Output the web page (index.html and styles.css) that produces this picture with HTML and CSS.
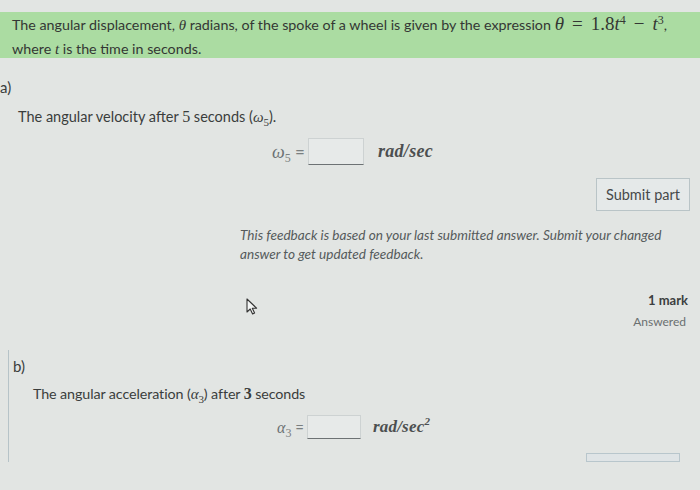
FILE: index.html
```html
<!DOCTYPE html>
<html>
<head>
<meta charset="utf-8">
<link rel="stylesheet" href="styles.css">
</head>
<body>
<div class="page">
  <div class="stem">
    <div>The angular displacement, <span class="m">θ</span> radians, of the spoke of a wheel is given by the expression <span class="math"><span class="m">θ</span><span class="op">=</span><span class="mr">1.8</span><span class="m">t</span><sup class="mr">4</sup><span class="op">−</span><span class="m">t</span><sup class="mr">3</sup></span>,</div>
    <div>where <span class="m">t</span> is the time in seconds.</div>
  </div>

  <div class="part-a">
    <div class="label-a">a)</div>
    <div class="prompt-a">The angular velocity after <span class="num">5</span> seconds (<span class="m">ω</span><sub class="mr">5</sub>).</div>
    <div class="answer answer-a">
      <span class="lhs"><span class="m">ω</span><sub class="mr">5</sub> =</span>
      <span class="box box-a"></span>
      <span class="unit">rad/sec</span>
    </div>
    <div class="submit-row"><div class="submit">Submit part</div></div>
    <div class="feedback">This feedback is based on your last submitted answer. Submit your changed<br>answer to get updated feedback.</div>
    <div class="marks-row">
      <svg class="cursor" width="12" height="17" viewBox="0 0 12 17"><path d="M1 1 L1 14 L4.2 11 L6.6 16 L8.6 15 L6.3 10.2 L10.6 10.2 Z" fill="#f4f6f5" stroke="#333" stroke-width="1.1" stroke-linejoin="round"/></svg>
      <div class="marks">
        <div class="mark">1 mark</div>
        <div class="answered">Answered</div>
      </div>
    </div>
  </div>

  <div class="part-b">
    <div class="label-b">b)</div>
    <div class="prompt-b">The angular acceleration (<span class="m">α</span><sub class="mr">3</sub>) after <span class="num bold">3</span> seconds</div>
    <div class="answer answer-b">
      <span class="lhs"><span class="m">α</span><sub class="mr">3</sub> =</span>
      <span class="box box-b"></span>
      <span class="unit">rad/sec<sup class="mr">2</sup></span>
    </div>
    <div class="bar-row"><div class="bar"></div></div>
  </div>
</div>
</body>
</html>
```

FILE: styles.css
```css
html, body {
  margin: 0;
  padding: 0;
}
body {
  background: #e2e5e3;
  font-family: Lato, "Noto Sans", sans-serif;
  color: #3a3d3c;
  width: 700px;
  height: 490px;
  overflow: hidden;
}
.page {
  padding-top: 12px;
}
.stem {
  background: #abdca2;
  padding: 0 12px;
  font-size: 14.3px;
  line-height: 23px;
  height: 46px;
  color: #343734;
  white-space: nowrap;
}
.m {
  font-family: "Liberation Serif", serif;
  font-style: italic;
  font-size: 15px;
}
.mr {
  font-family: "Liberation Serif", serif;
  font-size: 15px;
}
.math .m, .math .mr {
  font-size: 19px;
}
.math .op {
  font-family: "Liberation Serif", serif;
  font-size: 19px;
  margin: 0 8px;
}
sup.mr, sub.mr {
  font-size: 11px;
  line-height: 0;
}
.math sup.mr {
  font-size: 12px;
}
.num {
  font-family: "Liberation Serif", serif;
  font-size: 16px;
}
.num.bold { font-weight: bold; }
.label-a {
  margin-left: 0;
  margin-top: 19px;
  font-size: 15px;
  line-height: 20px;
}
.prompt-a {
  margin-top: 11px;
  padding-left: 18px;
  font-size: 14.5px;
  line-height: 18px;
}
.answer {
  display: flex;
  align-items: center;
}
.answer-a {
  margin-top: 12px;
  padding-left: 272px;
  height: 27px;
}
.lhs {
  color: #7a7f80;
  font-size: 17px;
}
.lhs .m { color: #6c7173; font-size: 18px; }
.lhs sub.mr { font-size: 12px; }
.box {
  display: block;
  background: #e7eae9;
  border: 1px solid #cdd2d2;
  border-bottom: 1px solid #6d7274;
}
.box-a {
  width: 54px;
  height: 25px;
  margin-left: 3px;
}
.unit {
  font-family: "Liberation Serif", serif;
  font-style: italic;
  font-weight: bold;
  font-size: 18px;
  color: #4c4f50;
  margin-left: 14px;
  letter-spacing: 0.3px;
}
.submit-row {
  display: flex;
  justify-content: flex-end;
  padding-right: 10px;
  margin-top: 13px;
}
.submit {
  border: 1px solid #b9c4c7;
  background: #e5e9e9;
  padding: 0 9px;
  height: 31px;
  line-height: 31px;
  font-size: 14.5px;
  color: #474a4b;
}
.feedback {
  padding-left: 240px;
  margin-top: 15px;
  font-size: 13.6px;
  font-style: italic;
  line-height: 19px;
  color: #555a5b;
}
.marks-row {
  display: flex;
  justify-content: space-between;
  padding-left: 246px;
  padding-right: 12px;
  margin-top: 26px;
}
.cursor {
  margin-top: 8px;
}
.marks {
  text-align: right;
}
.mark {
  font-size: 13px;
  font-weight: bold;
  color: #3c3f40;
  line-height: 20px;
}
.answered {
  font-size: 12px;
  color: #6a6f70;
  line-height: 20px;
  margin-top: 2px;
  margin-right: 2px;
}
.part-b {
  margin-top: 18px;
  margin-left: 8px;
  border-left: 1px solid #b6c3c8;
  padding-bottom: 0;
}
.label-b {
  padding-left: 4px;
  font-size: 15px;
  line-height: 20px;
  padding-top: 6px;
}
.prompt-b {
  padding-left: 24px;
  margin-top: 9px;
  font-size: 14.3px;
  line-height: 18px;
  letter-spacing: -0.1px;
}
.answer-b {
  margin-top: 12px;
  padding-left: 268px;
  height: 24px;
}
.answer-b .lhs { font-size: 15px; }
.answer-b .m { font-size: 16px; }
.box-b {
  width: 52px;
  height: 22px;
  margin-left: 3px;
}
.answer-b .unit { margin-left: 12px; font-size: 17px; letter-spacing: 0.2px; }
.bar-row {
  display: flex;
  justify-content: flex-end;
  padding-right: 20px;
  margin-top: 14px;
}
.bar {
  width: 92px;
  height: 7px;
  border: 1px solid #b8c6cc;
  background: #dfe4e6;
}
```
